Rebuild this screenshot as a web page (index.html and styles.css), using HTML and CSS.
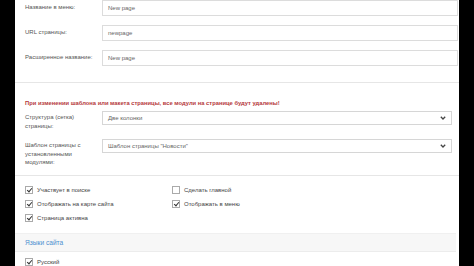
FILE: index.html
```html
<!DOCTYPE html>
<html lang="ru">
<head>
    <meta charset="UTF-8">
    <title>Свойства страницы</title>
    <link rel="stylesheet" href="styles.css">
</head>
<body>
    <div class="panel">
        <div class="section main-fields">
            <div class="row">
                <label class="label">Название в меню:</label>
                <div class="input">New page</div>
            </div>
            <div class="row">
                <label class="label">URL страницы:</label>
                <div class="input">newpage</div>
            </div>
            <div class="row">
                <label class="label">Расширенное название:</label>
                <div class="input">New page</div>
            </div>
        </div>

        <div class="section layout-fields">
            <p class="warning">При изменении шаблона или макета страницы, все модули на странице будут удалены!</p>
            <div class="row">
                <label class="label">Структура (сетка) страницы:</label>
                <div class="select">
                    <span>Две колонки</span>
                    <svg class="chevron" width="6" height="4" viewBox="0 0 6 4"><polyline points="0.8,0.8 3,3 5.2,0.8" fill="none" stroke="#444" stroke-width="1.3"/></svg>
                </div>
            </div>
            <div class="row">
                <label class="label">Шаблон страницы с установленными модулями:</label>
                <div class="select">
                    <span>Шаблон страницы "Новости"</span>
                    <svg class="chevron" width="6" height="4" viewBox="0 0 6 4"><polyline points="0.8,0.8 3,3 5.2,0.8" fill="none" stroke="#444" stroke-width="1.3"/></svg>
                </div>
            </div>
        </div>

        <div class="section options">
            <div class="check"><span class="box checked"></span>Участвует в поиске</div>
            <div class="check"><span class="box"></span>Сделать главной</div>
            <div class="check"><span class="box checked"></span>Отображать на карте сайта</div>
            <div class="check"><span class="box checked"></span>Отображать в меню</div>
            <div class="check"><span class="box checked"></span>Страница активна</div>
        </div>

        <div class="band">Языки сайта</div>

        <div class="section langs">
            <div class="check"><span class="box checked"></span>Русский</div>
        </div>
    </div>
</body>
</html>
```

FILE: styles.css
```css
body {
    margin: 0;
    background: #000;
    font-family: "Liberation Sans", Arial, sans-serif;
    font-size: 6px;
    color: #555;
    height: 266px;
    overflow: hidden;
}
.panel {
    margin: 0 15px;
    background: #fff;
    height: 266px;
}
.section {
    padding-left: 10px;
    border-bottom: 1px solid #e6e6e6;
}
.row {
    display: grid;
    grid-template-columns: 77px 1fr;
}
.label {
    line-height: 9px;
}
.main-fields {
    display: flex;
    flex-direction: column;
    gap: 9px;
    padding-bottom: 16px;
    padding-right: 1px;
}
.main-fields .label {
    padding-top: 3px;
}
.input {
    height: 14px;
    line-height: 14px;
    border: 1px solid #dcdcdc;
    padding-left: 5px;
    color: #666;
    background: #fff;
}
.layout-fields {
    padding-top: 16px;
    padding-bottom: 8px;
    padding-right: 7px;
}
.warning {
    margin: 0 0 3px;
    color: #b5393b;
    font-weight: bold;
    font-size: 5.8px;
    line-height: 9px;
}
.layout-fields .row + .row {
    margin-top: 9px;
}
.layout-fields .label {
    padding-top: 2px;
    width: 60px;
    line-height: 8.5px;
}
.select {
    height: 12px;
    line-height: 12px;
    border: 1px solid #d6d6d6;
    padding: 0 5px;
    color: #666;
    display: flex;
    justify-content: space-between;
    align-items: center;
}
.options {
    display: grid;
    grid-template-columns: 147px 1fr;
    padding-top: 7px;
    padding-bottom: 8px;
    border-bottom: none;
}
.check {
    display: flex;
    align-items: center;
    height: 14px;
    color: #444;
}
.box {
    width: 6px;
    height: 6px;
    border: 1px solid #aaa;
    background: #fff;
    margin-right: 4px;
    position: relative;
}
.box.checked::after {
    content: "";
    position: absolute;
    left: 1.5px;
    top: 0;
    width: 2px;
    height: 4px;
    border-right: 1.2px solid #333;
    border-bottom: 1.2px solid #333;
    transform: rotate(40deg);
}
.band {
    background: #f7f7f7;
    border-top: 1px solid #f0f0f0;
    border-bottom: 1px solid #ececec;
    height: 17px;
    line-height: 17px;
    padding-left: 10px;
    margin-right: 3px;
    color: #4c8fcf;
    font-size: 6.6px;
}
.langs {
    padding-top: 3px;
    border-bottom: none;
}
```
